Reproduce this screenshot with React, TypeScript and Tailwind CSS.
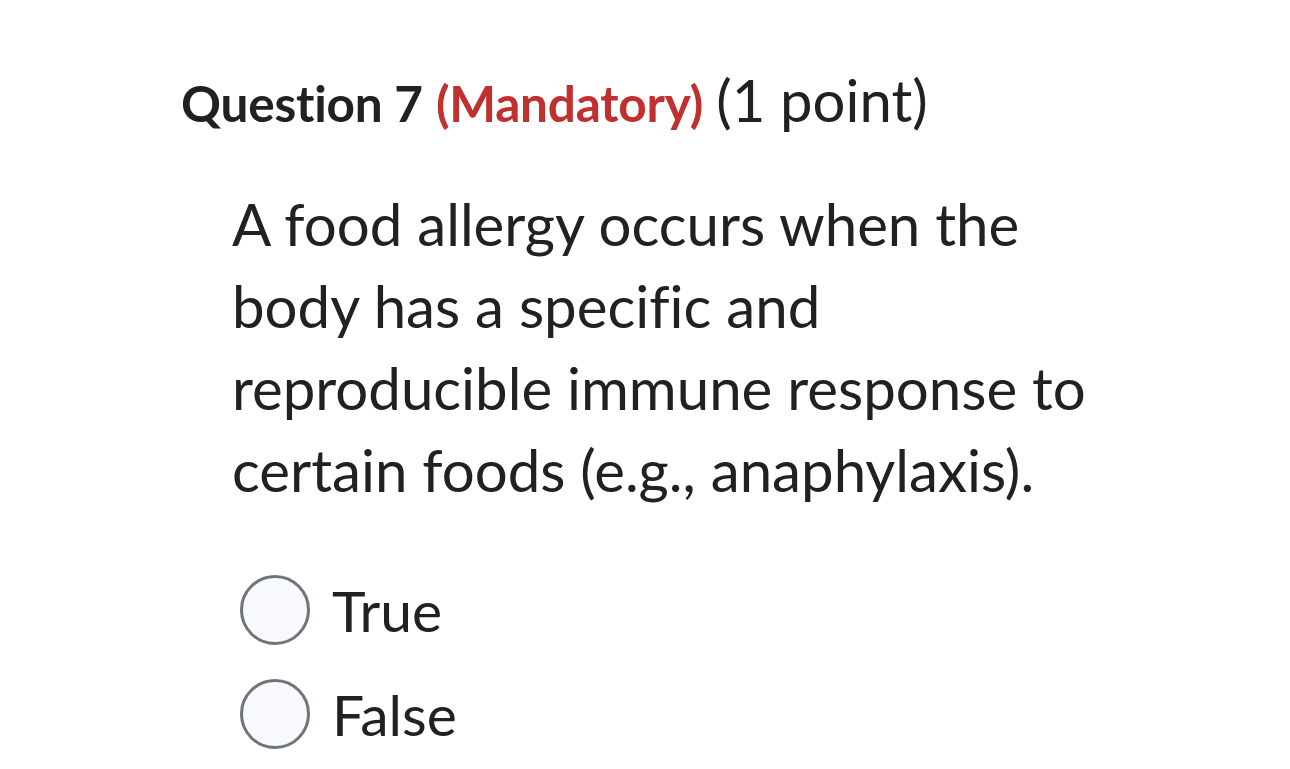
export default function App() {
  return (
    <div
      className="w-[1290px] h-[769px] bg-white overflow-hidden text-[#202122] [font-variant-ligatures:none]"
      style={{ fontFamily: "Lato, 'Open Sans', sans-serif" }}
    >
      <div className="pl-[181px] pt-[70px]">
        <h1 className="h-[60px] flex items-baseline gap-[13px] whitespace-nowrap">
          <span className="text-[49.5px] leading-[60px] font-bold tracking-[-0.2px]">Question 7</span>
          <span className="text-[49.5px] leading-[60px] font-bold tracking-[-0.2px] text-[#c0302e]">(Mandatory)</span>
          <span className="text-[58px] leading-[60px] font-normal">(1 point)</span>
        </h1>
        <div className="pl-[51px] mt-[53px]">
          <p className="w-[870px] text-[58.2px] leading-[82px]">
            A food allergy occurs when the body has a specific and reproducible immune response to certain foods
            (e.g., anaphylaxis).
          </p>
          <div className="mt-[47px] pl-[8px] flex flex-col">
            {["True", "False"].map((label) => (
              <label key={label} className="flex items-center h-[104px] gap-[22px]">
                <span className="w-[70px] h-[70px] rounded-full border-[3px] border-[#6f7478] bg-[#f8f9fe] shrink-0" />
                <span className="text-[57px] leading-[104px]">{label}</span>
              </label>
            ))}
          </div>
        </div>
      </div>
    </div>
  );
}
